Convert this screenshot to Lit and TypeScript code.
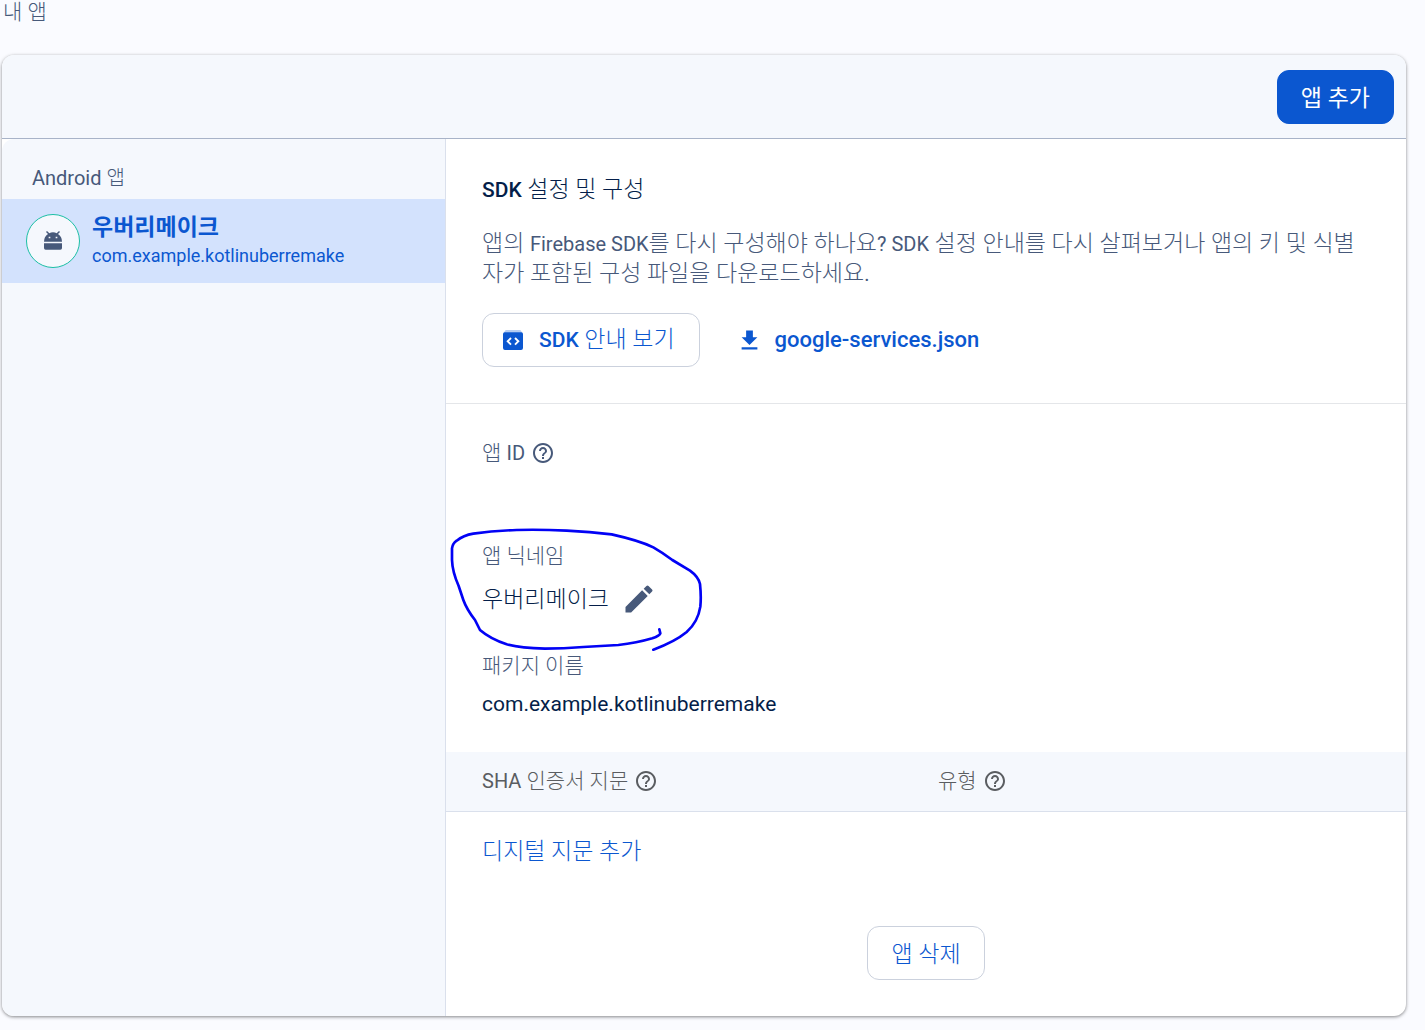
import { LitElement, html, css, svg } from "lit";
import { customElement } from "lit/decorators.js";

const helpIcon = html`<svg class="help-icon" viewBox="0 0 24 24" aria-hidden="true">
  <path d="M11 18h2v-2h-2v2zm1-16C6.48 2 2 6.48 2 12s4.48 10 10 10 10-4.48 10-10S17.52 2 12 2zm0 18c-4.41 0-8-3.59-8-8s3.59-8 8-8 8 3.59 8 8-3.59 8-8 8zm0-14c-2.21 0-4 1.79-4 4h2c0-1.1.9-2 2-2s2 .9 2 2c0 2-3 1.75-3 5h2c0-2.25 3-2.5 3-5 0-2.21-1.79-4-4-4z"/>
</svg>`;

const androidIcon = html`<svg class="android-icon" viewBox="0 0 54 57" aria-hidden="true">
  <path fill-rule="evenodd" d="M6 3 L9 0 L16 7 Q21 4 27 4 Q33 4 38 7 L45 0 L48 3 L42 9 Q54 17 54 32 L0 32 Q0 17 12 9 Z M14 17 v5 h5 v-5 Z M35 17 v5 h5 v-5 Z"/>
  <path d="M0 37 H54 V51 Q54 56 49 56 H5 Q0 56 0 51 Z"/>
</svg>`;

const codeIcon = html`<svg class="code-icon" viewBox="0 0 60 60" aria-hidden="true">
  <path opacity="0.3" d="M8 0 H52 L58 8 H2 Z"/>
  <path fill-rule="evenodd" d="M5 7 H55 Q60 7 60 12 V54 Q60 60 54 60 H6 Q0 60 0 54 V12 Q0 7 5 7 Z M22 22 L10 34 L22 46 L26 42 L18 34 L26 26 Z M38 22 L50 34 L38 46 L34 42 L42 34 L34 26 Z"/>
</svg>`;

const downloadIcon = html`<svg class="download-icon" viewBox="0 0 24 24" aria-hidden="true">
  <path d="M19 9h-4V3H9v6H5l7 7 7-7zM5 18v2h14v-2H5z"/>
</svg>`;

const pencilIcon = svg`<path d="M3 17.25V21h3.75L17.81 9.94l-3.75-3.75L3 17.25zM20.71 7.04a1 1 0 0 0 0-1.41l-2.34-2.34a1 1 0 0 0-1.41 0l-1.83 1.83 3.75 3.75 1.83-1.83z"/>`;

@customElement("app-root")
export class AppRoot extends LitElement {
  static styles = css`
    :host {
      display: block;
      min-height: 100vh;
      overflow: hidden;
      box-sizing: border-box;
      padding-bottom: 14px;
      background: #fafbff;
      color: #47597a;
      font-family: Roboto, "Noto Sans CJK KR", sans-serif;
      font-size: 23px;
      line-height: 30px;
      font-weight: 300;
    }
    * { box-sizing: border-box; }
    h1, h2, p, dl, dd { margin: 0; font-size: inherit; font-weight: inherit; }
    button { font: inherit; cursor: pointer; margin: 0; }
    svg { display: block; fill: currentColor; flex: none; }
    a { color: #0b57d0; text-decoration: none; }
    .latin { font-size: 20px; font-weight: 400; }
    .page-title {
      font-size: 21px;
      line-height: 24px;
      padding-left: 3px;
      margin-bottom: 31px;
    }
    .card {
      margin: 0 19px 0 2px;
      border-radius: 12px;
      background: #fff;
      box-shadow: 0 1px 3px rgba(0, 0, 0, 0.3), 0 1px 4px rgba(0, 0, 0, 0.2);
    }
    .card-header {
      display: flex;
      justify-content: flex-end;
      padding: 15px 12px 14px;
      background: #f5f8fd;
      border-bottom: 1px solid #a8b3c8;
      border-radius: 12px 12px 0 0;
    }
    .button {
      display: inline-flex;
      align-items: center;
      justify-content: center;
      height: 54px;
      padding: 4px 23px 0;
      border-radius: 12px;
      border: 1px solid #cbd1dd;
      background: #fff;
      color: #0b57d0;
    }
    .button-primary { background: #0b57d0; border-color: #0b57d0; color: #fff; font-weight: 400; }
    .card-body { display: grid; grid-template-columns: 444px minmax(0, 1fr); }
    .sidebar {
      background: #f5f8fd;
      border-right: 1px solid #dae0ec;
      border-radius: 12px 0 0 12px;
    }
    .group-title { padding: 24px 30px 6px; font-size: 20px; }
    .app-item {
      display: flex;
      align-items: center;
      gap: 12px;
      height: 84px;
      padding: 0 24px;
      background: #d3e2fd;
      color: #0b57d0;
    }
    .app-avatar {
      display: flex;
      align-items: center;
      justify-content: center;
      width: 54px;
      height: 54px;
      padding-bottom: 2px;
      border: 1px solid #1bbfa5;
      border-radius: 50%;
      background: #f5f8fd;
      color: #47597a;
    }
    .android-icon { width: 18px; height: 19px; }
    .app-text { display: flex; flex-direction: column; padding-top: 2px; line-height: 28px; }
    .app-name { font-weight: 700; }
    .app-package { font-size: 18px; font-weight: 400; }
    .section { padding: 36px 36px; border-bottom: 1px solid #e4e6e9; }
    .section-title { color: #041e49; margin-bottom: 24px; }
    .section-title .latin, .button .latin { font-weight: 500; font-size: 21px; }
    .section-text { margin-bottom: 24px; }
    .actions { display: flex; align-items: center; gap: 39px; }
    .button-guide { padding: 0 24px 0 20px; gap: 16px; }
    .code-icon { width: 20px; height: 20px; }
    .download { display: inline-flex; align-items: center; gap: 12px; font-size: 22px; font-weight: 500; }
    .download-icon { width: 27px; height: 27px; margin-left: -3px; }
    .fields { padding: 34px 36px 25px; }
    .field { display: flex; flex-direction: column; }
    .field-id { min-height: 103px; }
    .field-nickname { position: relative; min-height: 110px; }
    .label { display: flex; align-items: center; gap: 6px; font-size: 21px; }
    .help-icon { width: 24px; height: 24px; }
    .value { display: flex; align-items: center; color: #041e49; min-height: 58px; }
    .value-package { font-size: 21px; font-weight: 400; min-height: 46px; }
    .edit { border: 0; background: none; padding: 0 0 2px; margin-left: 12px; color: #47597a; }
    .edit-icon { width: 36px; height: 36px; }
    .scribble {
      position: absolute;
      left: -36px;
      top: -21px;
      width: 264px;
      height: 140px;
      fill: none;
      stroke: #0202f5;
      stroke-width: 8;
      stroke-linecap: round;
      stroke-linejoin: round;
      pointer-events: none;
    }
    .fingerprints { width: 100%; border-collapse: collapse; table-layout: fixed; text-align: left; }
    .fingerprints th {
      height: 59px;
      padding: 0 0 0 36px;
      background: #f5f8fd;
      border-bottom: 1px solid #dae0ec;
      color: #5a5d61;
      font-weight: 300;
    }
    .col-sha { width: 47.5%; }
    .fingerprints td { height: 81px; padding: 0 36px; }
    .footer { display: flex; justify-content: center; padding: 34px 36px 36px; }
  `;

  render() {
    return html`
      <h1 class="page-title" lang="ko">내 앱</h1>
      <main class="card" lang="ko">
        <header class="card-header">
          <button class="button button-primary" type="button">앱 추가</button>
        </header>
        <div class="card-body">
          <nav class="sidebar">
            <div class="group-title"><span class="latin">Android</span> 앱</div>
            <a class="app-item" href="#app" aria-current="page">
              <span class="app-avatar">${androidIcon}</span>
              <span class="app-text">
                <span class="app-name">우버리메이크</span>
                <span class="app-package">com.example.kotlinuberremake</span>
              </span>
            </a>
          </nav>
          <div class="content">
            <section class="section">
              <h2 class="section-title"><span class="latin">SDK</span> 설정 및 구성</h2>
              <p class="section-text">앱의 <span class="latin">Firebase SDK</span>를 다시 구성해야 하나요<span class="latin">? SDK</span> 설정 안내를 다시 살펴보거나 앱의 키 및 식별<wbr>자가 포함된 구성 파일을 다운로드하세요<span class="latin">.</span></p>
              <div class="actions">
                <button class="button button-guide" type="button">
                  ${codeIcon}<span><span class="latin">SDK</span> 안내 보기</span>
                </button>
                <a class="download" href="#download">${downloadIcon}google-services.json</a>
              </div>
            </section>
            <dl class="fields">
              <div class="field field-id">
                <dt class="label"><span>앱 <span class="latin">ID</span></span>${helpIcon}</dt>
              </div>
              <div class="field field-nickname">
                <dt class="label">앱 닉네임</dt>
                <dd class="value">우버리메이크
                  <button class="edit" type="button" aria-label="수정">
                    <svg class="edit-icon" viewBox="0 0 24 24" aria-hidden="true">${pencilIcon}</svg>
                  </button>
                </dd>
                <svg class="scribble" viewBox="18 300 792 420" aria-hidden="true">
                  <path d="M658 628 L661 640 Q659 647 637 655 Q590 669 535 675 L430 681 Q370 686 315 686 Q240 684 200 673 Q150 656 120 630 L105 600 Q80 568 70 540 L56 498 Q37 455 36 420 V385 Q38 370 50 362 Q70 346 100 341 Q160 332 230 330 Q300 328 380 332 Q450 335 515 343 Q600 362 640 382 Q668 398 697 420 L750 452 Q775 470 780 492 Q784 530 781 560 Q774 606 740 636 Q705 665 640 689"/>
                </svg>
              </div>
              <div class="field">
                <dt class="label">패키지 이름</dt>
                <dd class="value value-package">com.example.kotlinuberremake</dd>
              </div>
            </dl>
            <table class="fingerprints">
              <thead>
                <tr>
                  <th class="col-sha" scope="col"><span class="label"><span><span class="latin">SHA</span> 인증서 지문</span>${helpIcon}</span></th>
                  <th scope="col"><span class="label">유형${helpIcon}</span></th>
                </tr>
              </thead>
              <tbody>
                <tr><td colspan="2"><a href="#add-fingerprint">디지털 지문 추가</a></td></tr>
              </tbody>
            </table>
            <footer class="footer">
              <button class="button" type="button">앱 삭제</button>
            </footer>
          </div>
        </div>
      </main>
    `;
  }
}
